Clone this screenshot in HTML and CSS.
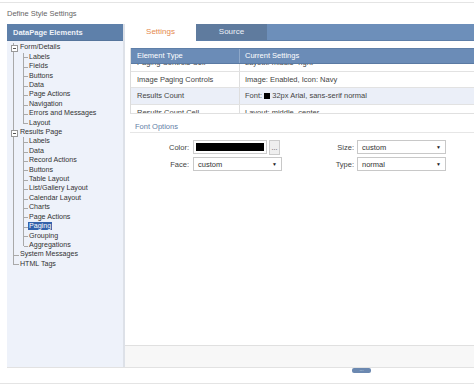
FILE: index.html
```html
<!DOCTYPE html>
<html>
<head>
<meta charset="utf-8">
<link rel="stylesheet" href="styles.css">
</head>
<body>
<div class="topline"></div>
<div class="title">Define Style Settings</div>
<div class="main">
  <aside class="side">
    <div class="side-head">DataPage Elements</div>
    <div class="tree-wrap">
      <ul class="root">
        <li class="node"><span class="toggle"></span><span class="lbl">Form/Details</span>
          <ul class="kids">
            <li><span class="lbl">Labels</span></li>
            <li><span class="lbl">Fields</span></li>
            <li><span class="lbl">Buttons</span></li>
            <li><span class="lbl">Data</span></li>
            <li><span class="lbl">Page Actions</span></li>
            <li><span class="lbl">Navigation</span></li>
            <li><span class="lbl">Errors and Messages</span></li>
            <li><span class="lbl">Layout</span></li>
          </ul>
        </li>
        <li class="node"><span class="toggle"></span><span class="lbl">Results Page</span>
          <ul class="kids">
            <li><span class="lbl">Labels</span></li>
            <li><span class="lbl">Data</span></li>
            <li><span class="lbl">Record Actions</span></li>
            <li><span class="lbl">Buttons</span></li>
            <li><span class="lbl">Table Layout</span></li>
            <li><span class="lbl">List/Gallery Layout</span></li>
            <li><span class="lbl">Calendar Layout</span></li>
            <li><span class="lbl">Charts</span></li>
            <li><span class="lbl">Page Actions</span></li>
            <li><span class="lbl sel">Paging</span></li>
            <li><span class="lbl">Grouping</span></li>
            <li><span class="lbl">Aggregations</span></li>
          </ul>
        </li>
        <li class="leaf"><span class="lbl">System Messages</span></li>
        <li class="leaf"><span class="lbl">HTML Tags</span></li>
      </ul>
    </div>
  </aside>
  <section class="pane">
    <div class="tabs">
      <div class="tab active">Settings</div>
      <div class="tab">Source</div>
    </div>
    <div class="content">
      <div class="grid">
        <div class="grid-head">
          <div class="c1">Element Type</div>
          <div class="c2">Current Settings</div>
        </div>
        <div class="grid-body">
          <div class="rows">
            <div class="row"><div class="c1">Paging Controls Cell</div><div class="c2">Layout: middle- right</div></div>
            <div class="row"><div class="c1">Image Paging Controls</div><div class="c2">Image: Enabled, Icon: Navy</div></div>
            <div class="row alt"><div class="c1">Results Count</div><div class="c2">Font: <span class="sw"></span> 32px Arial, sans-serif normal</div></div>
            <div class="row"><div class="c1">Results Count Cell</div><div class="c2">Layout: middle- center</div></div>
          </div>
        </div>
      </div>
      <div class="fo-title">Font Options</div>
      <div class="form">
        <div class="flabel l1">Color:</div>
        <div class="color-ctl"><div class="color-box"><div class="color-fill"></div></div><div class="dots">...</div></div>
        <div class="flabel l2">Size:</div>
        <div class="sel-box"><span>custom</span><span class="arr">&#9660;</span></div>
        <div class="flabel l1">Face:</div>
        <div class="sel-box"><span>custom</span><span class="arr">&#9660;</span></div>
        <div class="flabel l2">Type:</div>
        <div class="sel-box"><span>normal</span><span class="arr">&#9660;</span></div>
      </div>
    </div>
    <div class="footer"></div>
  </section>
</div>
<div class="below"><span class="mini-btn">...</span></div>
<div class="bottomline"></div>
</body>
</html>
```

FILE: styles.css
```css
html, body {
  margin: 0;
  padding: 0;
  background: #fff;
  overflow: hidden;
}
body {
  width: 474px;
  height: 387px;
  font-family: "Liberation Sans", Arial, sans-serif;
  font-size: 7.5px;
  color: #333;
}
.topline {
  margin-top: 2px;
  border-top: 1px solid #e4e4e4;
}
.title {
  height: 21px;
  line-height: 21px;
  padding-left: 7px;
  color: #666;
}
.main {
  display: flex;
  margin-left: 7px;
  height: 343px;
  border-bottom: 1px solid #e2e2e2;
}
.side {
  width: 116px;
  flex: none;
  background: #eef2fa;
  border-right: 2px solid #dde1e8;
  display: flex;
  flex-direction: column;
}
.side-head {
  height: 17px;
  line-height: 17px;
  background: #5e80aa;
  color: #eef2f8;
  font-weight: bold;
  padding-left: 6px;
  border-bottom: 1px solid #55759c;
  box-sizing: border-box;
}
.tree-wrap {
  padding: 2.4px 0 0 6px;
  font-size: 7.1px;
}
ul {
  list-style: none;
  margin: 0;
  padding: 0;
}
.root {
  border-left: 1px solid #a9a9a9;
}
li {
  position: relative;
  line-height: 9.4px;
  white-space: nowrap;
}
.root > li {
  padding-left: 6px;
}
.root > li.leaf::before {
  content: "";
  position: absolute;
  left: 0;
  top: 4.7px;
  width: 5px;
  border-top: 1px solid #a9a9a9;
}
.root > li:last-child::after,
.kids > li:last-child::after {
  content: "";
  position: absolute;
  left: -1px;
  top: 5px;
  bottom: 0;
  width: 1px;
  background: #eef2fa;
}
.toggle {
  position: absolute;
  left: -3px;
  top: 2px;
  width: 5px;
  height: 5px;
  border: 1px solid #999;
  background: #fff;
}
.toggle::after {
  content: "";
  position: absolute;
  left: 1px;
  top: 2px;
  width: 3px;
  border-top: 1px solid #555;
}
.lbl {
  color: #333;
}
.lbl.sel {
  background: #3462ab;
  color: #fff;
  padding: 0 1px;
  margin-left: -1px;
}
.kids {
  margin-left: 3px;
  border-left: 1px solid #a9a9a9;
}
.kids > li {
  padding-left: 5px;
}
.kids > li::before {
  content: "";
  position: absolute;
  left: 0;
  top: 4.7px;
  width: 4px;
  border-top: 1px solid #a9a9a9;
}
.pane {
  flex: 1;
  display: flex;
  flex-direction: column;
  min-width: 0;
}
.tabs {
  height: 17px;
  display: flex;
  background: #6d8fba;
  border-bottom: 1px solid #5d7ea8;
  box-sizing: border-box;
}
.tab {
  width: 71px;
  text-align: center;
  line-height: 16px;
  color: #eef2f8;
  background: #5f7b9e;
  font-size: 8px;
}
.tab.active {
  background: #fff;
  color: #e58a4e;
  height: 17px;
}
.content {
  flex: 1;
  padding: 7px 0 0 5px;
}
.grid {
  border-left: 1px solid #dcdcdc;
  border-bottom: 1px solid #e0e0e0;
}
.grid-head {
  display: grid;
  grid-template-columns: 108px 1fr;
  height: 16px;
  background: #6b8cb7;
  border-top: 1px solid #5f7fa8;
  border-bottom: 1px solid #5a7aa3;
  box-sizing: border-box;
  color: #fff;
  line-height: 14px;
}
.grid-head .c2 {
  border-left: 1px solid #8ea8c9;
}
.grid-body {
  height: 49px;
  overflow: hidden;
}
.rows {
  margin-top: -9px;
}
.row {
  display: grid;
  grid-template-columns: 108px 1fr;
  height: 16.5px;
  border-bottom: 1px solid #e2e2e2;
  box-sizing: border-box;
  line-height: 15.5px;
  color: #444;
}
.row.alt {
  background: #ebeff8;
}
.c1 {
  padding-left: 6px;
}
.c2 {
  padding-left: 5px;
  border-left: 1px solid #dedede;
}
.sw {
  display: inline-block;
  width: 6px;
  height: 6px;
  background: #000;
  vertical-align: -0.5px;
}
.fo-title {
  margin-top: 8px;
  height: 10px;
  line-height: 10px;
  padding-left: 5px;
  color: #5f7ea6;
  border-bottom: 1px solid #e6e6e6;
}
.form {
  display: grid;
  grid-template-columns: 63px 89px 75px 89px;
  grid-template-rows: 14px 14px;
  row-gap: 3px;
  margin-top: 7px;
  align-items: center;
}
.flabel {
  text-align: right;
  color: #444;
}
.flabel.l1 {
  padding-right: 4px;
}
.flabel.l2 {
  padding-right: 3px;
}
.color-ctl {
  display: flex;
  gap: 2px;
  height: 14px;
}
.color-box {
  width: 74px;
  box-sizing: border-box;
  border: 1px solid #ccc;
  padding: 2px;
  background: #fff;
}
.color-fill {
  height: 100%;
  background: #000;
}
.dots {
  width: 11px;
  height: 15px;
  box-sizing: border-box;
  border: 1px solid #ccc;
  background: #efefef;
  color: #444;
  text-align: center;
  line-height: 14px;
  font-size: 7px;
}
.sel-box {
  height: 14px;
  box-sizing: border-box;
  border: 1px solid #c8c8c8;
  background: #fff;
  display: flex;
  align-items: center;
  justify-content: space-between;
  padding: 0 4px 0 4px;
  color: #333;
}
.arr {
  font-size: 5px;
  color: #222;
}
.footer {
  height: 21px;
  background: #f7f7f7;
  border-top: 1px solid #e0e0e0;
}
.below {
  height: 15px;
  padding-left: 352px;
}
.mini-btn {
  display: block;
  width: 19px;
  height: 5px;
  background: #6b88b0;
  border-radius: 2px;
  color: #dfe6f0;
  font-size: 5px;
  line-height: 3px;
  text-align: center;
}
.bottomline {
  border-top: 1px solid #e4e4e4;
}
```
